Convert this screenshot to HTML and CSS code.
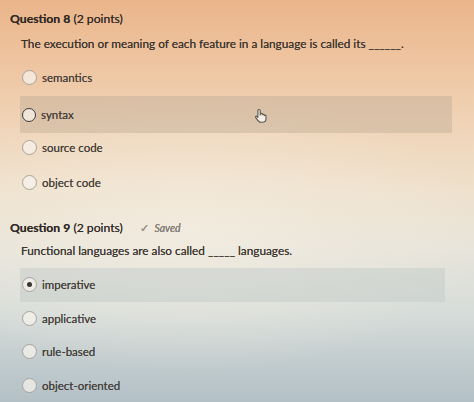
FILE: index.html
```html
<!DOCTYPE html>
<html>
<head>
<meta charset="utf-8">
<link rel="stylesheet" href="styles.css">
</head>
<body>
<div class="page">
  <section class="question q8">
    <h2 class="q-head"><b>Question 8</b> (2 points)</h2>
    <p class="q-text">The execution or meaning of each feature in a language is called its ______.</p>
    <ul class="options">
      <li class="opt"><span class="radio"></span><span class="label">semantics</span></li>
      <li class="opt hover"><span class="radio dark"></span><span class="label">syntax</span>
        <svg class="cursor" width="14" height="15" viewBox="0 0 14 15"><path d="M5 1.5c.8 0 1.2.5 1.2 1.2V7l.2-1.2c.2-.9 1.9-.8 1.9.3v.6c.3-.8 1.9-.7 1.9.3v.6c.3-.7 1.8-.6 1.8.4v2.8c0 2-1.4 3.5-3.6 3.5H7c-1.4 0-2.3-.7-3-1.7L1.6 9.4c-.5-.8.5-1.7 1.3-1l1 1V2.7c0-.7.4-1.2 1.1-1.2z" fill="#f4efe6" stroke="#5c5650" stroke-width="1.1" stroke-linejoin="round"/></svg>
      </li>
      <li class="opt"><span class="radio"></span><span class="label">source code</span></li>
      <li class="opt"><span class="radio"></span><span class="label">object code</span></li>
    </ul>
  </section>
  <section class="question q9">
    <h2 class="q-head"><b>Question 9</b> (2 points) <span class="saved"><span class="check">✓</span> Saved</span></h2>
    <p class="q-text">Functional languages are also called _____ languages.</p>
    <ul class="options">
      <li class="opt selected"><span class="radio on"></span><span class="label">imperative</span></li>
      <li class="opt"><span class="radio"></span><span class="label">applicative</span></li>
      <li class="opt"><span class="radio"></span><span class="label">rule-based</span></li>
      <li class="opt"><span class="radio"></span><span class="label">object-oriented</span></li>
    </ul>
  </section>
</div>
</body>
</html>
```
FILE: styles.css
```css
html, body {
  margin: 0;
  padding: 0;
}
body {
  width: 474px;
  height: 402px;
  overflow: hidden;
  font-family: Lato, "Open Sans", sans-serif;
  color: #3a342e;
  background:
    radial-gradient(ellipse 420px 200px at 40% 58%, rgba(247, 240, 228, 0.6), rgba(247, 240, 228, 0) 70%),
    linear-gradient(180deg, #eab58b 0%, #eec39e 14%, #f0d3b6 30%, #eee1cd 48%, #e7e4da 62%, #d6dcd9 78%, #c2ccce 90%, #b3c0c6 100%);
}
.page {
  display: flex;
  flex-direction: column;
  padding-top: 10px;
}
.question {
  display: flex;
  flex-direction: column;
}
.q9 {
  margin-top: 19px;
}
.q-head {
  margin: 0 0 0 10px;
  font-size: 12.2px;
  line-height: 18px;
  font-weight: 400;
  color: #2f2a25;
  text-shadow: 0 0 0.6px rgba(47, 42, 37, 0.8);
}
.q-head b {
  font-weight: 700;
}
.q-text {
  margin: 7px 0 0 21px;
  font-size: 11.8px;
  line-height: 18px;
  color: #3a342e;
  text-shadow: 0 0 0.6px rgba(58, 52, 46, 0.8);
}
.q9 .q-text {
  margin-top: 5px;
}
.options {
  list-style: none;
  margin: 7px 0 0 20px;
  padding: 0;
  width: 432px;
  display: flex;
  flex-direction: column;
}
.q9 .options {
  width: 425px;
  margin-top: 8px;
}
.opt {
  position: relative;
  height: 35px;
  display: flex;
  align-items: center;
  padding-left: 2px;
  gap: 5px;
}
.q8 .opt.hover {
  height: 37px;
  margin-top: 1px;
  margin-bottom: -3px;
}
.q9 .opt {
  height: 33.5px;
}
.opt.hover {
  background: rgba(190, 172, 150, 0.45);
}
.opt.selected {
  background: rgba(196, 204, 202, 0.5);
}
.radio {
  width: 13px;
  height: 13px;
  border-radius: 50%;
  border: 1px solid #a8a39c;
  background: rgba(248, 244, 238, 0.7);
  display: flex;
  align-items: center;
  justify-content: center;
  flex: none;
}
.radio.dark {
  border: 1.5px solid #3d3a38;
  width: 12px;
  height: 12px;
}
.radio.on::after {
  content: "";
  width: 5px;
  height: 5px;
  border-radius: 50%;
  background: #3a3633;
}
.label {
  font-size: 11.5px;
  color: #443e38;
  text-shadow: 0 0 0.6px rgba(68, 62, 56, 0.8);
}
.cursor {
  position: absolute;
  left: 234px;
  top: 12px;
}
.saved {
  margin-left: 14px;
  font-size: 10.5px;
  font-style: italic;
  color: #8c8780;
}
.check {
  font-style: normal;
  color: #a09a93;
  margin-right: 3px;
}
```
